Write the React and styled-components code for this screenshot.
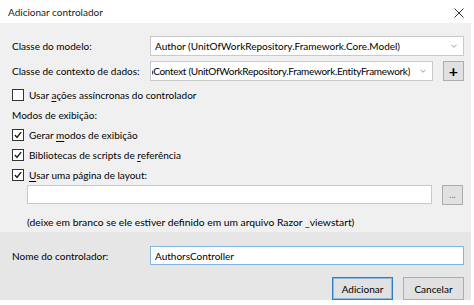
import React from "react";
import styled, { createGlobalStyle } from "styled-components";

const GlobalStyle = createGlobalStyle`
  html, body {
    margin: 0;
    padding: 0;
    background: #ffffff;
  }
  body {
    font-family: Lato, "Noto Sans", sans-serif;
    font-size: 10px;
    color: #000000;
  }
`;

const Window = styled.div`
  width: 474px;
  height: 305px;
  background: #ffffff;
  display: flex;
  flex-direction: column;
  overflow: hidden;
`;

const TitleBar = styled.div`
  height: 23px;
  display: flex;
  align-items: center;
  justify-content: space-between;
  padding: 0 10px 0 8px;
  color: #1a1a1a;
`;

const CloseIcon = styled.svg`
  width: 10px;
  height: 10px;
  margin-top: 2px;
`;

const Body = styled.div`
  width: 471px;
  background: #f0f0f0;
  padding: 13px 0 0 0;
  display: flex;
  flex-direction: column;
`;

const FieldRow = styled.div`
  display: grid;
  grid-template-columns: 150px minmax(0, 1fr) ${({ $extra }) => ($extra ? "31px" : "0px")};
  align-items: center;
  height: 20px;
  margin-bottom: ${({ $gap }) => $gap || 0}px;
  padding-right: 7px;
`;

const Label = styled.div`
  padding-left: 12px;
  white-space: nowrap;
  overflow: hidden;
`;

const Key = styled.span`
  text-decoration: underline;
  text-underline-offset: 2px;
`;

const Combo = styled.div`
  height: 20px;
  box-sizing: border-box;
  border: 1px solid #c9c9c9;
  background: #ffffff;
  display: flex;
  align-items: center;
  padding: 0 6px 0 ${({ $scrolled }) => ($scrolled ? 1 : 4)}px;
  overflow: hidden;
  white-space: nowrap;
`;

const ComboText = styled.div`
  flex: 1;
  min-width: 0;
  overflow: hidden;
  display: flex;
  justify-content: ${({ $scrolled }) => ($scrolled ? "flex-end" : "flex-start")};
  letter-spacing: ${({ $scrolled }) => ($scrolled ? "-0.3px" : "0")};
`;

const ComboValue = styled.span`
  flex: none;
  white-space: nowrap;
`;

const Chevron = styled.svg`
  width: 6px;
  height: 4px;
  flex: none;
  margin-left: 10px;
`;

const SmallButton = styled.button`
  justify-self: end;
  width: 21px;
  height: 20px;
  box-sizing: border-box;
  border: 1px solid #adadad;
  background: #e1e1e1;
  padding: 0;
  display: flex;
  align-items: center;
  justify-content: center;
  font-family: inherit;
  font-size: ${({ $big }) => ($big ? "16px" : "9px")};
  font-weight: ${({ $big }) => ($big ? 700 : 400)};
  color: ${({ $big }) => ($big ? "#000" : "#777")};
  line-height: 1;
`;

const CheckRow = styled.label`
  display: flex;
  align-items: center;
  height: 20px;
  padding-left: 12px;
  gap: 5px;
  ${({ $top }) => ($top ? `margin-top: ${$top}px;` : "")}
`;

const Box = styled.span`
  width: 10px;
  height: 10px;
  border: 1px solid #333333;
  background: #ffffff;
  display: flex;
  align-items: center;
  justify-content: center;
  flex: none;
`;

const Text = styled.div`
  height: 20px;
  display: flex;
  align-items: center;
  padding-left: ${({ $indent }) => $indent || 12}px;
  font-size: ${({ $size }) => $size || 10}px;
`;

const LayoutRow = styled.div`
  display: flex;
  align-items: center;
  gap: 10px;
  padding: 0 8px 0 27px;
  height: 19px;
  margin-bottom: 8px;
`;

const TextInput = styled.div`
  flex: 1;
  height: 19px;
  box-sizing: border-box;
  border: 1px solid ${({ $focus }) => ($focus ? "#82b4e6" : "#c9c9c9")};
  background: #ffffff;
  display: flex;
  align-items: center;
  padding: 0 4px;
`;

const Footer = styled.div`
  width: 471px;
  height: 68px;
  box-sizing: border-box;
  background: #e6e6e6;
  padding: 14px 7px 0 0;
  display: flex;
  flex-direction: column;
`;

const NameRow = styled.div`
  display: grid;
  grid-template-columns: 150px minmax(0, 1fr);
  align-items: center;
  height: 18px;
`;

const Buttons = styled.div`
  display: flex;
  justify-content: flex-end;
  gap: 10px;
  margin-top: 13px;
`;

const DialogButton = styled.button`
  width: 61px;
  height: 23px;
  box-sizing: border-box;
  border: 1px solid ${({ $default }) => ($default ? "#2f7dc4" : "#adadad")};
  box-shadow: ${({ $default }) => ($default ? "inset 0 0 0 1px #8fbbe3" : "none")};
  background: #e1e1e1;
  font-family: inherit;
  font-size: 10px;
  color: #000;
  padding: 0;
`;

const Check = () => (
  <svg width="8" height="8" viewBox="0 0 9 9">
    <path d="M1 4.6 L3.4 7.2 L8 1.3" fill="none" stroke="#222" strokeWidth="1.7" />
  </svg>
);

const Checkbox = ({ checked, top, children }) => (
  <CheckRow $top={top}>
    <Box>{checked && <Check />}</Box>
    <span>{children}</span>
  </CheckRow>
);

const Down = () => (
  <Chevron viewBox="0 0 7 4">
    <path d="M0.5 0.5 L3.5 3.5 L6.5 0.5" fill="none" stroke="#8a8a8a" strokeWidth="1" />
  </Chevron>
);

const ComboBox = ({ value, scrolled }) => (
  <Combo $scrolled={scrolled}>
    <ComboText $scrolled={scrolled}>
      <ComboValue>{value}</ComboValue>
    </ComboText>
    <Down />
  </Combo>
);

export default function App() {
  return (
    <Window>
      <GlobalStyle />
      <TitleBar>
        <span>Adicionar controlador</span>
        <CloseIcon viewBox="0 0 10 10">
          <path d="M0.5 0.5 L9.5 9.5 M9.5 0.5 L0.5 9.5" stroke="#333" strokeWidth="1" />
        </CloseIcon>
      </TitleBar>

      <Body>
        <FieldRow $gap={5}>
          <Label>
            Classe do <Key>m</Key>odelo:
          </Label>
          <ComboBox value="Author (UnitOfWorkRepository.Framework.Core.Model)" />
        </FieldRow>

        <FieldRow $extra>
          <Label>
            Classe de contexto de <Key>d</Key>ados:
          </Label>
          <ComboBox
            scrolled
            value="DbContext (UnitOfWorkRepository.Framework.EntityFramework)"
          />
          <SmallButton $big>+</SmallButton>
        </FieldRow>

        <Checkbox top={4}>
          Usar <Key>a</Key>ções assíncronas do controlador
        </Checkbox>
        <Text>Modos de exibição:</Text>
        <Checkbox checked>
          Gerar <Key>m</Key>odos de exibição
        </Checkbox>
        <Checkbox checked>
          Bibliotecas de scripts de <Key>r</Key>eferência
        </Checkbox>
        <Checkbox checked>
          <Key>U</Key>sar uma página de layout:
        </Checkbox>

        <LayoutRow>
          <TextInput />
          <SmallButton>...</SmallButton>
        </LayoutRow>

        <Text $indent={27} $size={10.3}>
          (deixe em branco se ele estiver definido em um arquivo Razor _viewstart)
        </Text>
      </Body>

      <Footer>
        <NameRow>
          <Label>
            <Key>N</Key>ome do controlador:
          </Label>
          <TextInput $focus>AuthorsController</TextInput>
        </NameRow>
        <Buttons>
          <DialogButton $default>Adicionar</DialogButton>
          <DialogButton>Cancelar</DialogButton>
        </Buttons>
      </Footer>
    </Window>
  );
}
